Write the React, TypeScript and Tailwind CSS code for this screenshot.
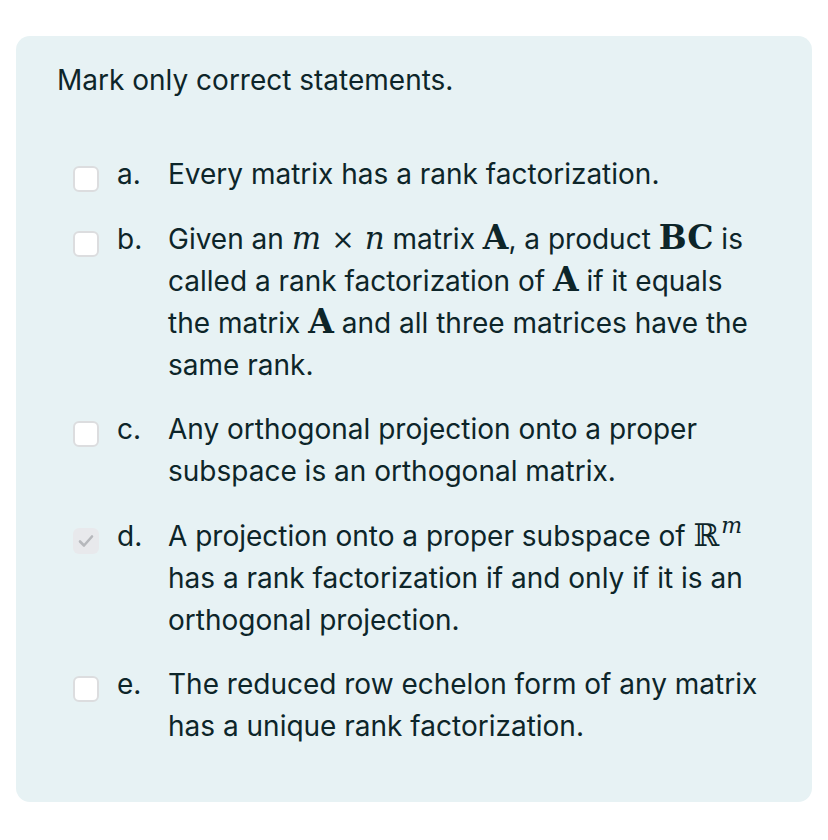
import React from 'react';

const sans = { fontFamily: 'Inter, "Noto Sans", sans-serif' };
const serif = { fontFamily: '"DejaVu Serif", "Liberation Serif", serif' };

function MathI({ children }: { children: React.ReactNode }) {
  return (
    <span className="italic text-[31px] leading-none" style={serif}>
      {children}
    </span>
  );
}

function MathB({ children }: { children: React.ReactNode }) {
  return (
    <span className="font-bold text-[33px] leading-none" style={serif}>
      {children}
    </span>
  );
}

function Checkbox({ checked }: { checked?: boolean }) {
  if (checked) {
    return (
      <div className="mt-[13px] flex h-[26px] w-[26px] shrink-0 items-center justify-center rounded-[6px] bg-[#e8e9ec]">
        <svg width="16" height="14" viewBox="0 0 16 14" fill="none">
          <path d="M2 7.5L6 11.5L14 2.5" stroke="#b6b8bc" strokeWidth="2.6" strokeLinecap="round" strokeLinejoin="round" />
        </svg>
      </div>
    );
  }
  return <div className="mt-[13px] h-[26px] w-[26px] shrink-0 rounded-[6px] border-2 border-[#dcdddf] bg-white" />;
}

interface Option {
  letter: string;
  checked?: boolean;
  body: React.ReactNode;
}

const options: Option[] = [
  { letter: 'a.', body: <>Every matrix has a rank factorization.</> },
  {
    letter: 'b.',
    body: (
      <>
        Given an <MathI>m</MathI>
        <span className="mx-[10px] text-[28px] leading-none" style={serif}>×</span>
        <MathI>n</MathI> matrix <MathB>A</MathB>, a product <MathB>BC</MathB> is called a rank factorization of{' '}
        <MathB>A</MathB> if it equals the matrix <MathB>A</MathB> and all three matrices have the same rank.
      </>
    ),
  },
  { letter: 'c.', body: <>Any orthogonal projection onto a proper subspace is an orthogonal matrix.</> },
  {
    letter: 'd.',
    checked: true,
    body: (
      <>
        A projection onto a proper subspace of{' '}
        <span className="text-[31px] leading-none" style={serif}>ℝ</span>
        <span className="relative top-[-13px] ml-[2px] italic text-[22px] leading-none" style={serif}>m</span>{' '}
        has a rank factorization if and only if it is an orthogonal projection.
      </>
    ),
  },
  { letter: 'e.', body: <>The reduced row echelon form of any matrix has a unique rank factorization.</> },
];

export default function App() {
  return (
    <div className="min-h-[840px] bg-white pt-[36px] px-4" style={sans}>
      <div className="w-[796px] rounded-[14px] bg-[#e7f2f4] pl-[41px] pr-[30px] pt-[23px] pb-[55px] text-[#0d2529]">
        <p className="text-[28px] leading-[42px]">Mark only correct statements.</p>
        <div className="mt-[52px] flex flex-col gap-[22.5px] pl-[16px]">
          {options.map((o) => (
            <div key={o.letter} className="flex text-[28px] leading-[42px]">
              <Checkbox checked={o.checked} />
              <span className="ml-[18px] w-[51px] shrink-0">{o.letter}</span>
              <div className="w-[600px]">{o.body}</div>
            </div>
          ))}
        </div>
      </div>
    </div>
  );
}
